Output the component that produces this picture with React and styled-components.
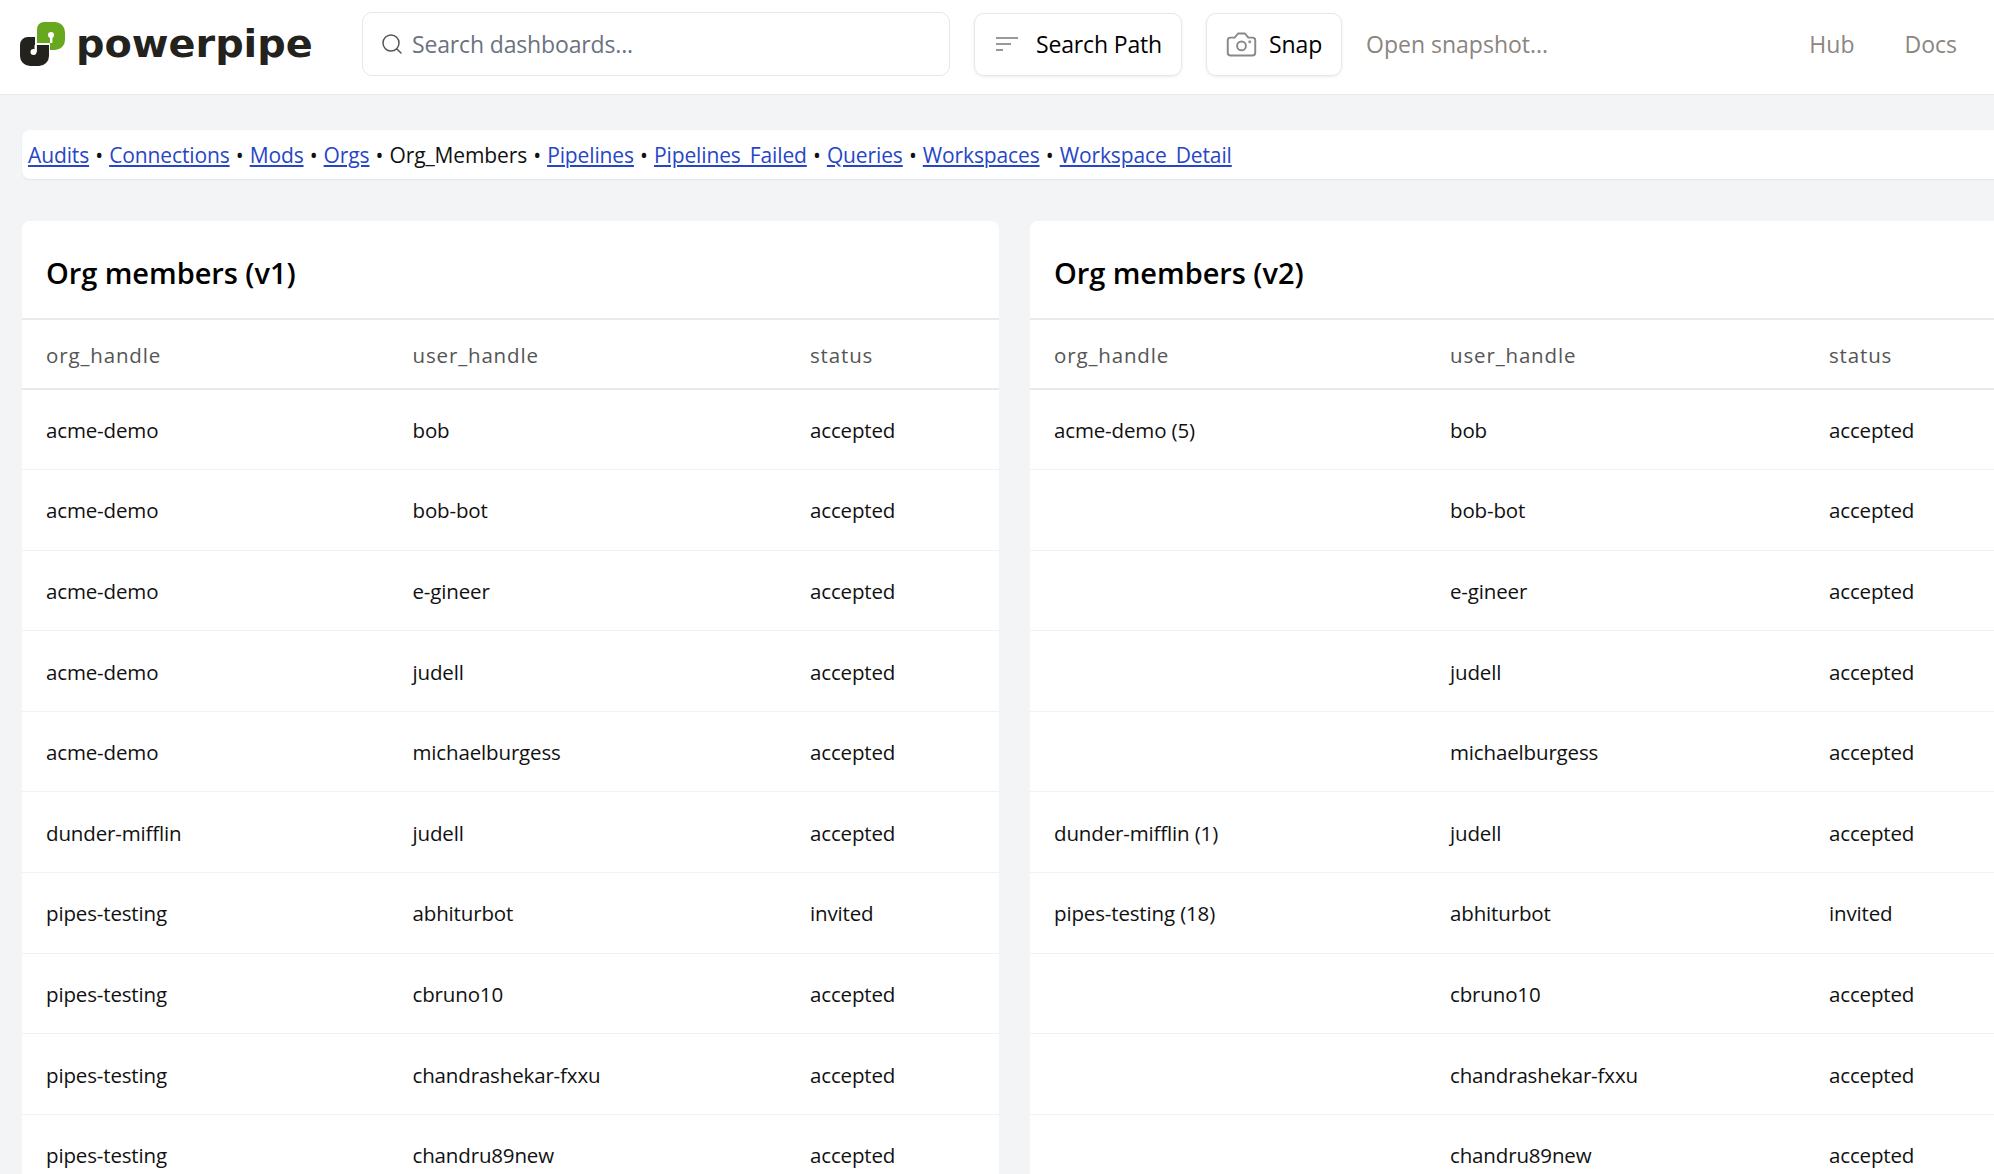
import React from "react";
import styled, { createGlobalStyle } from "styled-components";
import { Search } from "lucide-react";

const FONT = `"Open Sans", "Noto Sans", sans-serif`;

const Global = createGlobalStyle`
  html, body { margin: 0; padding: 0; height: 100%; overflow: hidden; background: #f3f4f6; }
  body { font-family: ${FONT}; color: #111; }
  * { box-sizing: border-box; }
`;

const Page = styled.div`
  width: 2040px;
  height: 1174px;
  overflow: hidden;
`;
const Header = styled.header`
  width: 1994px;
  height: 95px;
  background: #fff;
  border-bottom: 1px solid #e5e7eb;
  display: flex;
  align-items: center;
  padding: 0 37px 6px 20px;
`;
const Brand = styled.div`
  display: flex;
  align-items: center;
  width: 342px;
  flex: none;
`;
const BrandMark = styled.svg`
  width: 46px;
  height: 46px;
  flex: none;
  margin-right: 10px;
`;
const BrandName = styled.span`
  font-family: "DejaVu Sans", sans-serif;
  font-weight: 700;
  font-size: 37px;
  line-height: 1;
  color: #24221c;
  transform: scaleX(1.075);
  transform-origin: left center;
`;
const SearchBox = styled.div`
  width: 588px;
  height: 64px;
  flex: none;
  display: flex;
  align-items: center;
  gap: 8px;
  padding-left: 17px;
  border: 1px solid #e5e7eb;
  border-radius: 10px;
  font-size: 23px;
  letter-spacing: -0.15px;
  color: #6b7280;
`;
const ToolButton = styled.div`
  height: 63px;
  flex: none;
  display: flex;
  align-items: center;
  margin-left: 24px;
  padding: 0 19px 0 ${(p) => p.$left}px;
  gap: ${(p) => p.$gap}px;
  border: 1px solid #e5e7eb;
  border-radius: 10px;
  box-shadow: 0 1px 3px rgba(0, 0, 0, 0.08);
  font-size: 23px;
  letter-spacing: -0.15px;
  color: #000;
`;
const MutedLink = styled.span`
  font-size: 23px;
  color: #8b8580;
`;
const OpenSnapshot = styled(MutedLink)`
  margin-left: 24px;
`;
const Spacer = styled.div`
  flex: 1;
`;
const RightLinks = styled.nav`
  display: flex;
  gap: 50px;
`;
const Content = styled.main`
  padding: 35px 0 0 22px;
  width: 2006px;
  display: flex;
  flex-direction: column;
  gap: 42px;
`;
const NavCard = styled.nav`
  height: 49px;
  background: #fff;
  border-radius: 8px;
  box-shadow: 0 1px 2px rgba(0, 0, 0, 0.06);
  padding: 0 6px;
  display: flex;
  align-items: center;
  white-space: pre;
  font-size: 21px;
  letter-spacing: -0.12px;
  color: #111;
`;
const NavLink = styled.a`
  color: #2746c7;
  text-decoration: underline;
`;
const Bullet = styled.span`
  margin: 0 0.8px;
`;
const Panels = styled.div`
  display: grid;
  grid-template-columns: 976.5px 976.5px;
  gap: 31.5px;
`;
const Panel = styled.section`
  background: #fff;
  border-radius: 8px 8px 0 0;
`;
const PanelTitle = styled.h2`
  margin: 0;
  height: 99px;
  padding: 5px 0 0 24px;
  display: flex;
  align-items: center;
  font-size: 29px;
  font-weight: 600;
  letter-spacing: -0.05px;
  color: #000;
  border-bottom: 2px solid #e9eaec;
`;
const Table = styled.table`
  width: 100%;
  table-layout: fixed;
  border-collapse: collapse;
  font-size: 20.5px;
  letter-spacing: -0.15px;
`;
const HeadCell = styled.th`
  height: 69px;
  padding: 2px 0 0 24px;
  text-align: left;
  font-weight: 400;
  letter-spacing: 0.85px;
  color: #555;
  border-bottom: 2px solid #e9eaec;
`;
const Cell = styled.td`
  height: 80.6px;
  padding: 1px 0 0 24px;
  color: #111;
  border-bottom: 1px solid #f1f2f4;
`;

const LINKS = ["Audits", "Connections", "Mods", "Orgs", "Org_Members", "Pipelines", "Pipelines_Failed", "Queries", "Workspaces", "Workspace_Detail"];
const USERS = [
  ["acme-demo", "bob", "accepted", "acme-demo (5)"],
  ["acme-demo", "bob-bot", "accepted", ""],
  ["acme-demo", "e-gineer", "accepted", ""],
  ["acme-demo", "judell", "accepted", ""],
  ["acme-demo", "michaelburgess", "accepted", ""],
  ["dunder-mifflin", "judell", "accepted", "dunder-mifflin (1)"],
  ["pipes-testing", "abhiturbot", "invited", "pipes-testing (18)"],
  ["pipes-testing", "cbruno10", "accepted", ""],
  ["pipes-testing", "chandrashekar-fxxu", "accepted", ""],
  ["pipes-testing", "chandru89new", "accepted", ""],
];

function Logo() {
  return (
    <BrandMark viewBox="0 0 46 46">
      <path d="M24 1H35a10 10 0 0 1 10 10V19a10 10 0 0 1-10 10H30V22H17V8a7 7 0 0 1 7-7z" fill="#67a81f" />
      <circle cx="31" cy="14" r="3" fill="#fff" />
      <path d="M30 14h2.4v8H30z" fill="#fff" />
      <path d="M8 16H15V24H29V35a10 10 0 0 1-10 10H10A10 10 0 0 1 0 35V24a8 8 0 0 1 8-8z" fill="#24221c" />
      <circle cx="13.5" cy="31" r="3" fill="#fff" />
      <path d="M14.5 24h2.4v7h-2.4z" fill="#fff" />
    </BrandMark>
  );
}

function CameraIcon() {
  return (
    <svg width="33" height="33" viewBox="0 0 24 24" fill="none" stroke="#888" strokeWidth="1.4" strokeLinejoin="round">
      <path d="M14.5 4h-5L7 7H4a2 2 0 0 0-2 2v9a2 2 0 0 0 2 2h16a2 2 0 0 0 2-2V9a2 2 0 0 0-2-2h-3l-2.5-3z" />
      <circle cx="12" cy="13" r="3.2" />
      <circle cx="18" cy="10" r="0.4" />
    </svg>
  );
}

function MemberTable({ widths, grouped }) {
  return (
    <Table>
      <colgroup>
        {widths.map((w) => (
          <col key={w} style={{ width: w }} />
        ))}
      </colgroup>
      <thead>
        <tr>
          <HeadCell>org_handle</HeadCell>
          <HeadCell>user_handle</HeadCell>
          <HeadCell>status</HeadCell>
        </tr>
      </thead>
      <tbody>
        {USERS.map((r) => (
          <tr key={r[1] + r[0]}>
            <Cell>{grouped ? r[3] : r[0]}</Cell>
            <Cell>{r[1]}</Cell>
            <Cell>{r[2]}</Cell>
          </tr>
        ))}
      </tbody>
    </Table>
  );
}

export default function App() {
  return (
    <Page>
      <Global />
      <Header>
        <Brand>
          <Logo />
          <BrandName>powerpipe</BrandName>
        </Brand>
        <SearchBox>
          <Search size={24} strokeWidth={1.5} color="#555" />
          Search dashboards...
        </SearchBox>
        <ToolButton $gap={18} $left={21}>
          <svg width="22" height="14" viewBox="0 0 22 14" fill="none" stroke="#999" strokeWidth="1.8">
            <path d="M0 1h22M0 7h15M0 13h7" />
          </svg>
          Search Path
        </ToolButton>
        <ToolButton $gap={11} $left={18}>
          <CameraIcon />
          Snap
        </ToolButton>
        <OpenSnapshot>Open snapshot...</OpenSnapshot>
        <Spacer />
        <RightLinks>
          <MutedLink>Hub</MutedLink>
          <MutedLink>Docs</MutedLink>
        </RightLinks>
      </Header>
      <Content>
        <NavCard>
          {LINKS.map((l, i) => (
            <React.Fragment key={l}>
              {i > 0 && <Bullet> • </Bullet>}
              {l === "Org_Members" ? l : <NavLink href="#">{l}</NavLink>}
            </React.Fragment>
          ))}
        </NavCard>
        <Panels>
          <Panel>
            <PanelTitle>Org members (v1)</PanelTitle>
            <MemberTable widths={["366.5px", "397.5px", "212.5px"]} />
          </Panel>
          <Panel>
            <PanelTitle>Org members (v2)</PanelTitle>
            <MemberTable widths={["396px", "379px", "201.5px"]} grouped />
          </Panel>
        </Panels>
      </Content>
    </Page>
  );
}
